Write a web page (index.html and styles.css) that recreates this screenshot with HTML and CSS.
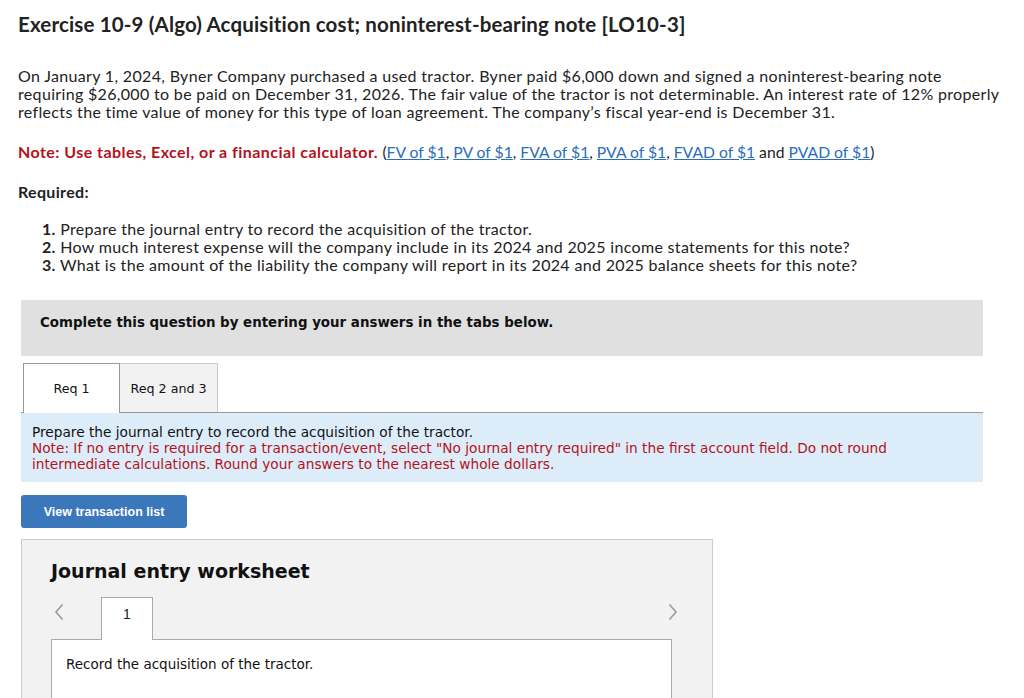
FILE: index.html
```html
<!DOCTYPE html>
<html>
<head>
<meta charset="utf-8">
<link rel="stylesheet" href="styles.css">
</head>
<body>
<div class="page">
  <h1 class="title">Exercise 10-9 (Algo) Acquisition cost; noninterest-bearing note [LO10-3]</h1>
  <p class="intro">On January 1, 2024, Byner Company purchased a used tractor. Byner paid $6,000 down and signed a noninterest-bearing note requiring $26,000 to be paid on December 31, 2026. The fair value of the tractor is not determinable. An interest rate of 12% properly reflects the time value of money for this type of loan agreement. The company’s fiscal year-end is December 31.</p>
  <p class="note"><span class="note-red">Note: Use tables, Excel, or a financial calculator.</span> <span class="links">(<a href="#">FV of $1</a>, <a href="#">PV of $1</a>, <a href="#">FVA of $1</a>, <a href="#">PVA of $1</a>, <a href="#">FVAD of $1</a> and <a href="#">PVAD of $1</a>)</span></p>
  <p class="required">Required:</p>
  <ol class="req-list">
    <li><b>1.</b> Prepare the journal entry to record the acquisition of the tractor.</li>
    <li><b>2.</b> How much interest expense will the company include in its 2024 and 2025 income statements for this note?</li>
    <li><b>3.</b> What is the amount of the liability the company will report in its 2024 and 2025 balance sheets for this note?</li>
  </ol>

  <div class="answer">
    <div class="instruct">Complete this question by entering your answers in the tabs below.</div>
    <div class="tabs">
      <div class="tab active">Req 1</div>
      <div class="tab">Req 2 and 3</div>
    </div>
    <div class="tab-info">
      <div>Prepare the journal entry to record the acquisition of the tractor.</div>
      <div class="red">Note: If no entry is required for a transaction/event, select "No journal entry required" in the first account field. Do not round intermediate calculations. Round your answers to the nearest whole dollars.</div>
    </div>
    <button class="btn">View transaction list</button>
    <div class="worksheet">
      <h2 class="ws-title">Journal entry worksheet</h2>
      <div class="ws-nav">
        <span class="arrow left"><svg width="12" height="18" viewBox="0 0 12 18"><path d="M9.5 1.5 L3 9 L9.5 16.5" fill="none" stroke="#999" stroke-width="1.6"/></svg></span>
        <div class="ws-tab">1</div>
        <span class="arrow right"><svg width="12" height="18" viewBox="0 0 12 18"><path d="M2.5 1.5 L9 9 L2.5 16.5" fill="none" stroke="#999" stroke-width="1.6"/></svg></span>
      </div>
      <div class="ws-body">Record the acquisition of the tractor.</div>
    </div>
  </div>
</div>
</body>
</html>
```

FILE: styles.css
```css
html, body { margin: 0; padding: 0; background: #fff; }
body { font-family: "Lato", "Open Sans", sans-serif; color: #222; }
.page { padding: 0 41px 0 18px; }
.title { font-size: 20.5px; font-weight: 700; margin: 0; padding-top: 12px; line-height: 24px; color: #222; letter-spacing: 0.15px; }
.intro, .note, .required, .req-list { font-size: 16px; letter-spacing: 0.33px; line-height: 18px; }
.intro { margin: 31px -22px 0 0; }
.note { margin: 22px 0 0; }
.note-red { color: #b5121b; font-weight: 700; letter-spacing: 0.45px; }
.links { letter-spacing: 0; font-size: 15.7px; }
.note a { color: #2a6ebb; text-decoration: underline; }
.required { font-weight: 700; margin: 22px 0 0; }
.req-list { list-style: none; margin: 19px 0 0; padding: 0 0 0 24px; }
.req-list li { margin: 0; }
.answer { margin: 26px 0 0 3px; font-family: "DejaVu Sans", Verdana, sans-serif; }
.instruct { background: #e0e0e0; height: 56px; box-sizing: border-box; padding: 15px 19px; font-weight: 700; font-size: 13.4px; color: #111; }
.tabs { display: flex; margin-top: 7px; padding-left: 2px; border-bottom: 1px solid #999; height: 49px; }
.tab { width: 97px; box-sizing: border-box; display: flex; align-items: center; justify-content: center; font-size: 12.7px; background: #f2f2f2; border: 1px solid #ccc; border-bottom: none; color: #111; }
.tab.active { background: #fff; border-color: #999; height: 50px; }
.tab + .tab { border-left: none; width: 98px; }
.tab-info { background: #dcecf9; padding: 11px 20px 10px 11px; font-size: 13.7px; line-height: 16px; color: #111; height: 69px; box-sizing: border-box; }
.tab-info .red { color: #b5121b; }
.btn { display: block; margin-top: 13px; width: 166px; height: 33px; background: #3a77bb; color: #fff; border: none; border-radius: 3px; font-family: "Liberation Sans", Arial, sans-serif; font-weight: 700; font-size: 12.5px; padding: 0; }
.worksheet { margin-top: 11px; width: 692px; box-sizing: border-box; background: #f2f2f2; border: 1px solid #ccc; padding: 0 40px 0 29px; height: 200px; }
.ws-title { font-size: 19px; font-weight: 700; margin: 19px 0 0; line-height: 24px; color: #111; }
.ws-nav { display: flex; align-items: stretch; margin-top: 14px; height: 43px; position: relative; }
.arrow { padding-top: 6px; }
.arrow svg { display: block; }
.arrow.left { width: 50px; padding-left: 2px; box-sizing: border-box; }
.arrow.right { margin-left: auto; margin-right: -7px; }
.ws-tab { width: 52px; box-sizing: border-box; background: #fff; border: 1px solid #aaa; border-bottom: none; text-align: center; font-family: "Liberation Sans", Arial, sans-serif; font-size: 14px; padding-top: 8px; position: relative; z-index: 1; height: 43px; }
.ws-body { background: #fff; border: 1px solid #aaa; margin-top: -1px; height: 80px; padding: 16px 14px; box-sizing: border-box; font-size: 13.5px; color: #111; }
```
